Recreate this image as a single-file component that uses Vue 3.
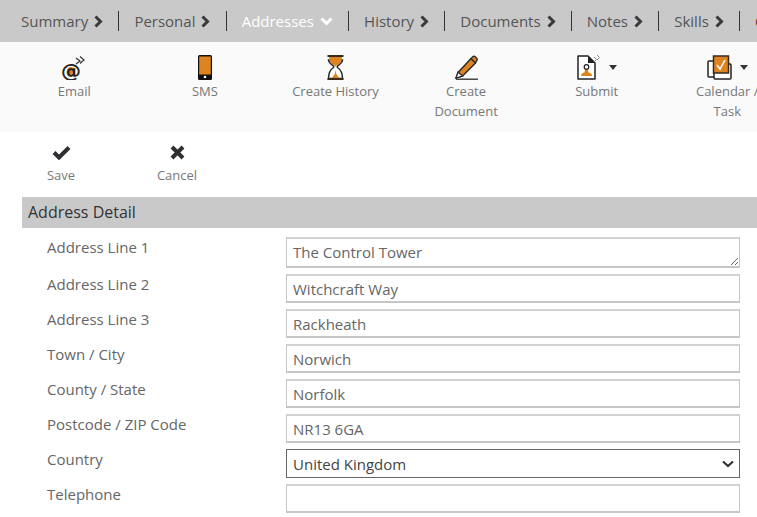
<template>
  <div class="page">
    <!-- Tabs -->
    <nav class="tabs">
      <div v-for="tab in tabs" :key="tab" class="tab" :class="{ active: tab === 'Addresses' }">
        <span>{{ tab }}</span>
        <svg v-if="tab === 'Addresses'" class="chev-down" width="13" height="9" viewBox="0 0 13 9">
          <path d="M1.5 1.500 6.500 6.500 11.500 1.500" fill="none" stroke="#fff" stroke-width="3" />
        </svg>
        <svg v-else class="chev" width="9" height="13" viewBox="0 0 9 13">
          <path d="M1.500 1.500 6.500 6.500 1.500 11.500" fill="none" stroke="#3a3a3a" stroke-width="3" />
        </svg>
      </div>
      <div class="tab last"><span class="cut">C</span></div>
    </nav>

    <!-- Action toolbar -->
    <div class="toolbar">
      <div class="tool">
        <div class="icon">
          <svg width="24" height="25" viewBox="0 0 24 25">
            <circle cx="9" cy="16" r="4" fill="#dd8420" />
            <text x="9" y="22.500" text-anchor="middle" class="at">@</text>
            <path d="M14 3l4 3-4 3M18 1.500l4 3.500-4 3.500" fill="none" stroke="#333" stroke-width="1.200" />
          </svg>
        </div>
        <div class="name">Email</div>
      </div>
      <div class="tool">
        <div class="icon">
          <svg width="14" height="25" viewBox="0 0 14 25">
            <rect width="14" height="25" rx="1.500" fill="#111" />
            <rect x="1.200" y="1.500" width="11.600" height="18" fill="#dd8420" />
            <circle cx="7" cy="22" r="1.300" fill="#fff" />
          </svg>
        </div>
        <div class="name">SMS</div>
      </div>
      <div class="tool">
        <div class="icon">
          <svg width="17" height="25" viewBox="0 0 17 25">
            <path d="M1.500 5h14c0 4-7 6-5 7.500 3 2 5 5 5 11h-14c0-6 2-9 5-11 2-1.500-5-3.500-5-7.500z" fill="#fff" stroke="#2a2a2a" stroke-width="1.500" />
            <path d="M2 1.500h13l-.5 4c-1 3-4 4-6 6-2-2-5-3-6-6z" fill="#dd8420" />
            <path d="M8.500 15l.8 4 3 4h-7.500l3-4z" fill="#dd8420" />
            <rect x="0.500" y="0" width="16" height="2" fill="#3a2a1a" />
            <rect x="0.500" y="23" width="16" height="2" fill="#3a2a1a" />
          </svg>
        </div>
        <div class="name">Create History</div>
      </div>
      <div class="tool">
        <div class="icon">
          <svg width="24" height="25" viewBox="0 0 24 25">
            <path d="M5 16.500 17 3.500l4.500 4.500-13 13-6.500 2z" fill="#dd8420" stroke="#2a2a2a" stroke-width="1.500" stroke-linejoin="round" />
            <path d="M4 17l4.500 4-6.500 2z" fill="#fff" stroke="#2a2a2a" stroke-width="1.300" />
            <path d="M17 3.500 18.500 2c1-1 2-1 3 0l1 1c1 1 1 2 0 3l-1 2z" fill="#dd8420" stroke="#2a2a2a" stroke-width="1.300" />
            <path d="M2 24.200h22" stroke="#2a2a2a" stroke-width="1.300" />
          </svg>
        </div>
        <div class="name">Create Document</div>
      </div>
      <div class="tool">
        <div class="icon with-caret">
          <svg width="24" height="25" viewBox="0 0 24 25">
            <path d="M1 1h10l7 7v16H1z" fill="#fff" stroke="#222" stroke-width="1.500" stroke-linejoin="round" />
            <path d="M11 1v7h7z" fill="#222" />
            <circle cx="9.500" cy="12" r="2.300" fill="#fff" stroke="#222" stroke-width="1.200" />
            <path d="M8 15h3l.5 2.500c2 .3 3.500 1 3.500 3.500H4c0-2.500 1.500-3.200 3.500-3.500z" fill="#dd8420" />
            <path d="M17 2l2.500 2.500L17 7M20 0l2.500 2.500L20 5" fill="none" stroke="#888" stroke-width="1" />
          </svg>
          <span class="caret"></span>
        </div>
        <div class="name">Submit</div>
      </div>
      <div class="tool">
        <div class="icon with-caret">
          <svg width="25" height="25" viewBox="0 0 25 25">
            <rect x="1" y="6" width="16" height="16" rx="1" fill="#fff" stroke="#222" stroke-width="1.500" />
            <rect x="7" y="9" width="17" height="15" rx="1" fill="#fff" stroke="#222" stroke-width="1.500" />
            <rect x="6.500" y="1" width="15" height="17" fill="#dd8420" stroke="#3a2a1a" stroke-width="1.500" />
            <path d="M10 10l3 4 5-9" fill="none" stroke="#fff" stroke-width="1.500" />
          </svg>
          <span class="caret"></span>
        </div>
        <div class="name">Calendar / Task</div>
      </div>
    </div>

    <!-- Save / cancel -->
    <div class="actions">
      <div class="action">
        <svg width="19" height="15" viewBox="0 0 19 15">
          <path d="M2 7.500 7 12.500 17 2.500" fill="none" stroke="#2f2f33" stroke-width="4" />
        </svg>
        <div class="name">Save</div>
      </div>
      <div class="action">
        <svg width="15" height="15" viewBox="0 0 15 15">
          <path d="M2 2 13 13M13 2 2 13" fill="none" stroke="#2f2f33" stroke-width="4" />
        </svg>
        <div class="name">Cancel</div>
      </div>
    </div>

    <!-- Address form -->
    <h2 class="section">Address Detail</h2>
    <form class="form">
      <label class="row first">
        <span class="label">Address Line 1</span>
        <textarea class="field area" rows="1" :value="'The Control Tower'"></textarea>
      </label>
      <label v-for="row in rows" :key="row.label" class="row">
        <span class="label">{{ row.label }}</span>
        <input class="field" type="text" :value="row.value" />
      </label>
      <label class="row">
        <span class="label">Country</span>
        <span class="select-wrap">
          <select class="field select">
            <option>United Kingdom</option>
          </select>
          <svg class="select-arrow" width="12" height="8" viewBox="0 0 12 8">
            <path d="M1 1.500 6 6 11 1.500" fill="none" stroke="#333" stroke-width="2.200" />
          </svg>
        </span>
      </label>
      <label class="row">
        <span class="label">Telephone</span>
        <input class="field" type="text" value="" />
      </label>
    </form>
  </div>
</template>

<script setup>
const tabs = ['Summary', 'Personal', 'Addresses', 'History', 'Documents', 'Notes', 'Skills']

const rows = [
  { label: 'Address Line 2', value: 'Witchcraft Way' },
  { label: 'Address Line 3', value: 'Rackheath' },
  { label: 'Town / City', value: 'Norwich' },
  { label: 'County / State', value: 'Norfolk' },
  { label: 'Postcode / ZIP Code', value: 'NR13 6GA' },
]
</script>

<style>
html,
body {
  overflow: hidden;
  background: #fff;
}
</style>

<style scoped>
.page {
  width: 757px;
  height: 517px;
  overflow: hidden;
  font-family: 'Open Sans', sans-serif;
  color: #555;
}

/* Tabs */
.tabs {
  display: flex;
  align-items: center;
  height: 42px;
  padding-left: 21px;
  background: #c9c9c9;
  white-space: nowrap;
  overflow: hidden;
}

.tab {
  display: flex;
  flex: none;
  align-items: center;
  gap: 6px;
  height: 20px;
  padding-right: 15.2px;
  margin-right: 15px;
  border-right: 1px solid #333;
  font-size: 15px;
  color: #555;
}

.tab.active {
  color: #fff;
}

.tab.last {
  padding-right: 0;
  border-right: 0;
}

.cut {
  color: #7a2a2a;
}

/* Toolbar */
.toolbar {
  display: flex;
  height: 90px;
  padding-left: 9px;
  background: #fafafa;
  overflow: hidden;
}

.tool {
  flex: none;
  width: 130.6px;
  padding-top: 12px;
  text-align: center;
}

.tool .name {
  max-width: 90px;
  margin: 0 auto;
}

.icon {
  display: flex;
  align-items: flex-end;
  justify-content: center;
  height: 26px;
  margin-bottom: 1px;
}

.at {
  font-family: 'DejaVu Sans', sans-serif;
  font-size: 20px;
  font-weight: 700;
  fill: #222;
}

.with-caret {
  gap: 8px;
  align-items: center;
}

.caret {
  width: 0;
  height: 0;
  border-left: 4.5px solid transparent;
  border-right: 4.5px solid transparent;
  border-top: 5px solid #333;
}

.name {
  font-size: 13px;
  line-height: 20px;
  color: #777;
}

/* Save / cancel */
.actions {
  display: flex;
  height: 65px;
  padding-left: 3px;
}

.action {
  width: 116px;
  padding-top: 13px;
  text-align: center;
}

.action svg {
  display: block;
  margin: 0 auto 5px;
}

/* Form */
.section {
  height: 31px;
  margin: 0 0 0 22px;
  padding-left: 6px;
  background: #c9c9c9;
  font-size: 16px;
  font-weight: 400;
  line-height: 31px;
  color: #333;
}

.form {
  display: flex;
  flex-direction: column;
  gap: 6px;
  padding: 9px 17px 0 47px;
}

.row {
  display: grid;
  grid-template-columns: 239px 454px;
  align-items: start;
}

.label {
  font-size: 15px;
  line-height: 21px;
  color: #666;
}

.field {
  display: block;
  box-sizing: border-box;
  width: 454px;
  height: 29px;
  margin: 0;
  padding: 1px 6px 0;
  border: 1px solid #c6c6c6;
  border-width: 2px 1px 2px 1px;
  border-color: #d2d2d2 #c6c6c6 #c6c6c6;
  border-radius: 0;
  background: #fff;
  font-family: inherit;
  font-size: 15px;
  color: #666;
  outline: none;
}

.area {
  height: 31px;
  padding: 3px 6px 0;
  line-height: 21px;
  resize: both;
  overflow: hidden;
}

.select-wrap {
  position: relative;
  display: block;
}

.select {
  border: 1px solid #666;
  appearance: none;
  color: #444;
}

.select-arrow {
  position: absolute;
  top: 11px;
  right: 6px;
}
</style>
